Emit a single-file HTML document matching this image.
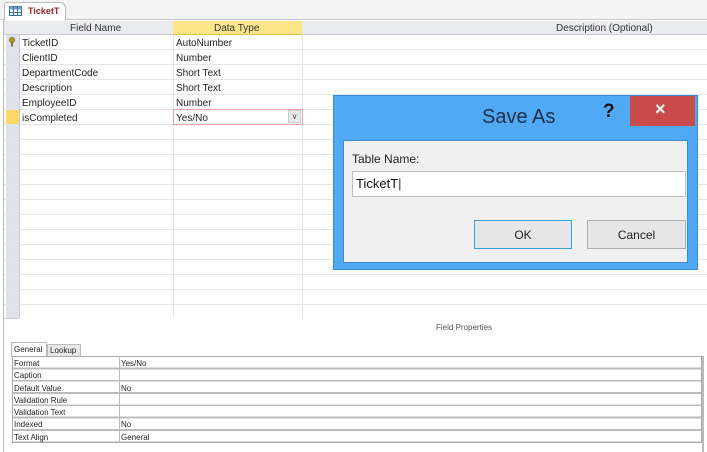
<!DOCTYPE html>
<html><head><meta charset="utf-8"><style>
*{margin:0;padding:0;box-sizing:border-box}
body{width:707px;height:452px;background:#fff;position:relative;overflow:hidden;font-family:"Liberation Sans",sans-serif;font-size:10px;color:#222}
.a{position:absolute}
.t{position:absolute;white-space:nowrap}
</style></head><body>
<div class="a" style="left:0;top:0;width:707px;height:20px;background:#f3f3f3;border-bottom:1px solid #c8c8c8"></div>
<div class="a" style="left:4px;top:2px;width:62px;height:19px;background:#fff;border:1px solid #bbb;border-bottom:none;border-radius:2px 6px 0 0"></div>
<svg class="a" style="left:9px;top:6px" width="13" height="10"><rect x="0.5" y="0.5" width="12" height="9" fill="#fff" stroke="#3a6ea8"/><rect x="0.5" y="0.5" width="12" height="3" fill="#6a9fd8"/><line x1="4.5" y1="0" x2="4.5" y2="10" stroke="#3a6ea8"/><line x1="8.5" y1="0" x2="8.5" y2="10" stroke="#3a6ea8"/><line x1="0" y1="6.5" x2="13" y2="6.5" stroke="#3a6ea8"/></svg>
<div class="t" style="left:28px;top:6px;font-size:9px;font-weight:bold;color:#a4262c">TicketT</div>
<div class="a" style="left:3px;top:20px;width:1px;height:432px;background:#bbb"></div>
<div class="a" style="left:4px;top:21px;width:703px;height:14px;background:#e9ebee;border-bottom:1px solid #c8ccd2"></div>
<div class="a" style="left:173px;top:21px;width:129px;height:14px;background:#fde68a;border-bottom:1px solid #e0c050"></div>
<div class="t" style="left:70px;top:23px;color:#333">Field Name</div>
<div class="t" style="left:214px;top:23px;color:#333">Data Type</div>
<div class="t" style="left:556px;top:23px;color:#333">Description (Optional)</div>
<div class="a" style="left:6px;top:35px;width:13px;height:283px;background:#dfe2e8"></div>
<div class="a" style="left:6px;top:110px;width:13px;height:15px;background:#fcd864"></div>
<div class="a" style="left:4px;top:35px;width:703px;height:283px;background:repeating-linear-gradient(to bottom,transparent 0,transparent 14px,#e2e5ea 14px,#e2e5ea 15px)"></div>
<div class="a" style="left:19px;top:35px;width:1px;height:283px;background:#c8ccd2"></div>
<div class="a" style="left:173px;top:35px;width:1px;height:283px;background:#e2e5ea"></div>
<div class="a" style="left:302px;top:21px;width:1px;height:297px;background:#e2e5ea"></div>
<div class="a" style="left:4px;top:318px;width:15px;height:1px;background:#c8ccd2"></div>
<svg class="a" style="left:8px;top:37px" width="8" height="10"><circle cx="4" cy="3" r="2.5" fill="#b8a020" stroke="#6a5a10" stroke-width="0.8"/><rect x="3.2" y="5" width="1.6" height="4.5" fill="#6a5a10"/></svg>
<div class="t" style="left:22px;top:38px">TicketID</div>
<div class="t" style="left:22px;top:53px">ClientID</div>
<div class="t" style="left:22px;top:68px">DepartmentCode</div>
<div class="t" style="left:22px;top:83px">Description</div>
<div class="t" style="left:22px;top:98px">EmployeeID</div>
<div class="t" style="left:22px;top:113px">isCompleted</div>
<div class="t" style="left:176px;top:38px">AutoNumber</div>
<div class="t" style="left:176px;top:53px">Number</div>
<div class="t" style="left:176px;top:68px">Short Text</div>
<div class="t" style="left:176px;top:83px">Short Text</div>
<div class="t" style="left:176px;top:98px">Number</div>
<div class="a" style="left:173px;top:109px;width:130px;height:16px;border:1px solid #f0a0a8;background:#fff"></div>
<div class="t" style="left:176px;top:113px">Yes/No</div>
<div class="a" style="left:288px;top:110px;width:13px;height:13px;background:#e8e8e8;border:1px solid #ccc;font-size:8px;text-align:center;line-height:11px;color:#555">&#8744;</div>
<div class="t" style="left:436px;top:323px;font-size:8px;color:#555">Field Properties</div>
<div class="a" style="left:11px;top:342px;width:36px;height:15px;background:#fff;border:1px solid #bbb;border-bottom:none"></div>
<div class="t" style="left:14px;top:345px;font-size:8px">General</div>
<div class="a" style="left:47px;top:344px;width:34px;height:13px;background:#e8e8e8;border:1px solid #bbb;border-bottom:none"></div>
<div class="t" style="left:50px;top:346px;font-size:8px">Lookup</div>
<div class="a" style="left:12px;top:356px;width:690px;height:87px;border:1px solid #aaa;background:repeating-linear-gradient(to bottom,#fff 0,#fff 10.5px,#bbb 10.5px,#bbb 12.3px)"></div>
<div class="a" style="left:119px;top:356px;width:1px;height:87px;background:#bbb"></div>
<div class="a" style="left:702px;top:356px;width:2px;height:96px;background:#bbb"></div>
<div style="position:absolute;left:14px;top:358px;font-size:8px;line-height:12.3px">Format<br>Caption<br>Default Value<br>Validation Rule<br>Validation Text<br>Indexed<br>Text Align</div>
<div style="position:absolute;left:121px;top:358px;font-size:8px;line-height:12.3px">Yes/No<br>&nbsp;<br>No<br>&nbsp;<br>&nbsp;<br>No<br>General</div>
<div class="a" style="left:333px;top:95px;width:365px;height:175px;background:#50a9f5;border:1px solid #3a8ad8"></div>
<div class="a" style="left:630px;top:96px;width:65px;height:30px;background:#c94b4c"></div>
<div class="t" style="left:655px;top:99px;color:#fff;font-size:18px;font-weight:bold">×</div>
<div class="t" style="left:603px;top:101px;color:#111;font-size:19px;font-weight:bold">?</div>
<div class="t" style="left:482px;top:106px;color:#1e2f45;font-size:20px">Save As</div>
<div class="a" style="left:343px;top:140px;width:345px;height:123px;background:#f0f0f0;border:1px solid #3a8ad8"></div>
<div class="t" style="left:352px;top:152px;font-size:12px;color:#222">Table Name:</div>
<div class="a" style="left:352px;top:171px;width:334px;height:26px;background:#fff;border:1px solid #bbb"></div>
<div class="t" style="left:356px;top:176px;font-size:13px;color:#111">TicketT<span style="color:#333">|</span></div>
<div class="a" style="left:474px;top:220px;width:98px;height:29px;background:#e6e6e6;border:1px solid #3c9de0;text-align:center;line-height:29px;font-size:12px">OK</div>
<div class="a" style="left:587px;top:220px;width:99px;height:29px;background:#e6e6e6;border:1px solid #adadad;text-align:center;line-height:29px;font-size:12px">Cancel</div>
</body></html>
